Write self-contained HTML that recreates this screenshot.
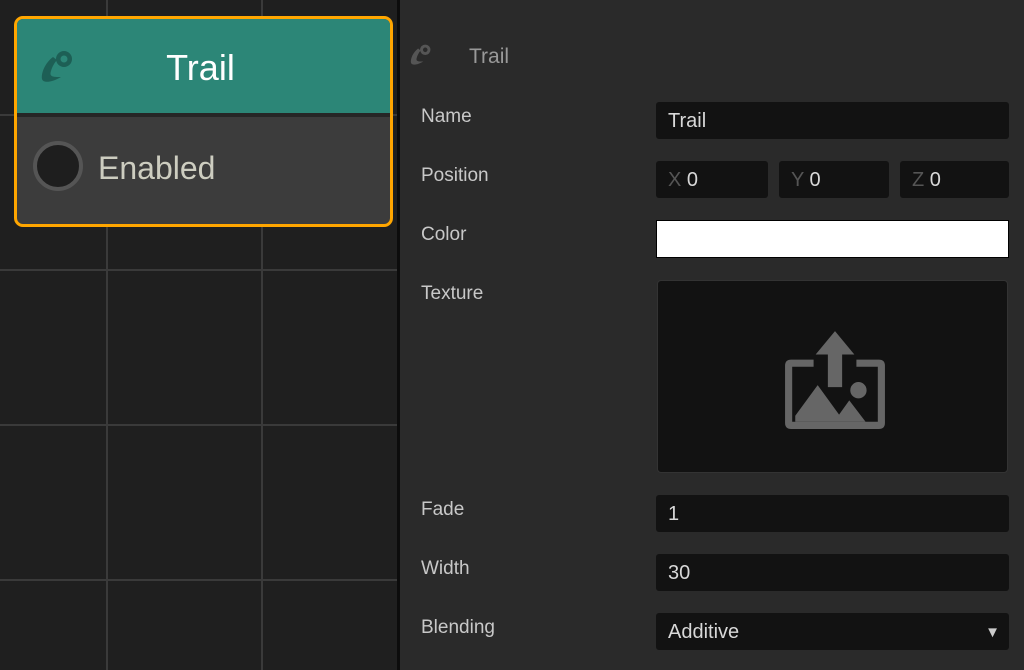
<!DOCTYPE html>
<html><head><style>
body{margin:0;width:1024px;height:670px;overflow:hidden;background:#2a2a2a;font-family:"Liberation Sans",sans-serif;position:relative}
.left{position:absolute;left:0;top:0;width:397px;height:670px;background:#1f1f1f}
.vl{position:absolute;top:0;width:2px;height:670px;background:#3a3a3a}
.hl{position:absolute;left:0;height:2px;width:397px;background:#3a3a3a}
.div{position:absolute;left:397px;top:0;width:3px;height:670px;background:#0c0c0c}
.node{position:absolute;left:14px;top:16px;width:373px;height:205px;border:3px solid #ffa600;border-radius:9px;overflow:hidden;background:#3c3c3c}
.hdr{position:absolute;left:0;top:0;width:100%;height:94px;background:#2c8677;border-bottom:4px solid #262626}
.lbl{position:absolute;left:421px;color:#c8c8c8;font-size:19px}
.in{position:absolute;background:#121212;border-radius:3px;color:#d8d8d8;font-size:20px;box-sizing:border-box;padding-left:12px;line-height:39px;height:37px}
</style></head><body>
<div class="left">
<div class="vl" style="left:106px"></div><div class="vl" style="left:261px"></div>
<div class="hl" style="top:114px"></div><div class="hl" style="top:269px"></div><div class="hl" style="top:424px"></div><div class="hl" style="top:579px"></div>
</div>
<div class="div"></div>
<div class="node">
<div class="hdr">
<svg style="position:absolute;left:22px;top:28px" width="40" height="40" viewBox="0 0 40 40"><path d="M14 10 C6 16 2 26 3 32 C4 36 12 36 22 30 C14 30 10 30 12 24 C13 20 16 15 18 13 Z" fill="#1d5f55"/><circle cx="25" cy="12" r="8" fill="#1d5f55"/><circle cx="25" cy="12" r="3.5" fill="#2c8677"/></svg>
<div style="position:absolute;left:0;width:100%;top:28px;text-align:center;color:#fff;font-size:36px;padding-right:6px;box-sizing:border-box">Trail</div>
</div>
<div style="position:absolute;left:16px;top:122px;width:50px;height:50px;border-radius:50%;background:#1e1e1e;border:4px solid #555;box-sizing:border-box"></div>
<div style="position:absolute;left:81px;top:131px;color:#cdcdc0;font-size:32px">Enabled</div>
</div>
<svg style="position:absolute;left:409px;top:42px" width="26" height="26" viewBox="0 0 40 40"><path d="M14 10 C6 16 2 26 3 32 C4 36 12 36 22 30 C14 30 10 30 12 24 C13 20 16 15 18 13 Z" fill="#555"/><circle cx="25" cy="12" r="8" fill="#555"/><circle cx="25" cy="12" r="3.5" fill="#2a2a2a"/></svg>
<div style="position:absolute;left:469px;top:45px;color:#999;font-size:21px">Trail</div>
<div class="lbl" style="top:106px">Name</div>
<div class="lbl" style="top:165px">Position</div>
<div class="lbl" style="top:224px">Color</div>
<div class="lbl" style="top:283px">Texture</div>
<div class="lbl" style="top:499px">Fade</div>
<div class="lbl" style="top:558px">Width</div>
<div class="lbl" style="top:617px">Blending</div>
<div class="in" style="left:656px;top:102px;width:353px">Trail</div>
<div class="in" style="left:656px;top:161px;width:112px"><span style="color:#555">X</span> 0</div>
<div class="in" style="left:779px;top:161px;width:110px"><span style="color:#555">Y</span> 0</div>
<div class="in" style="left:900px;top:161px;width:109px"><span style="color:#555">Z</span> 0</div>
<div style="position:absolute;left:656px;top:220px;width:353px;height:38px;background:#fff;border:1px solid #000;box-sizing:border-box"></div>
<div style="position:absolute;left:657px;top:280px;width:351px;height:193px;background:#121212;border-radius:4px;border:1px solid #333;box-sizing:border-box">
<svg style="position:absolute;left:122px;top:45px" width="110" height="106" viewBox="0 0 106 104"><path d="M32 33 H10 Q4 33 4 39 V95 Q4 101 10 101 H96 Q102 101 102 95 V39 Q102 33 96 33 H74 V40 H95 V94 H11 V40 H32 Z" fill="#666"/><path d="M53 5 L34 28 H46 V60 H60 V28 H72 Z" fill="#666"/><circle cx="76" cy="63" r="8" fill="#666"/><path d="M14 88 L36 58 L57 87 L67 73 L83 94 H14Z" fill="#666"/></svg>
</div>
<div class="in" style="left:656px;top:495px;width:353px">1</div>
<div class="in" style="left:656px;top:554px;width:353px">30</div>
<div class="in" style="left:656px;top:613px;width:353px">Additive<span style="position:absolute;right:9px;font-size:15px;color:#ccc">▼</span></div>
</body></html>
